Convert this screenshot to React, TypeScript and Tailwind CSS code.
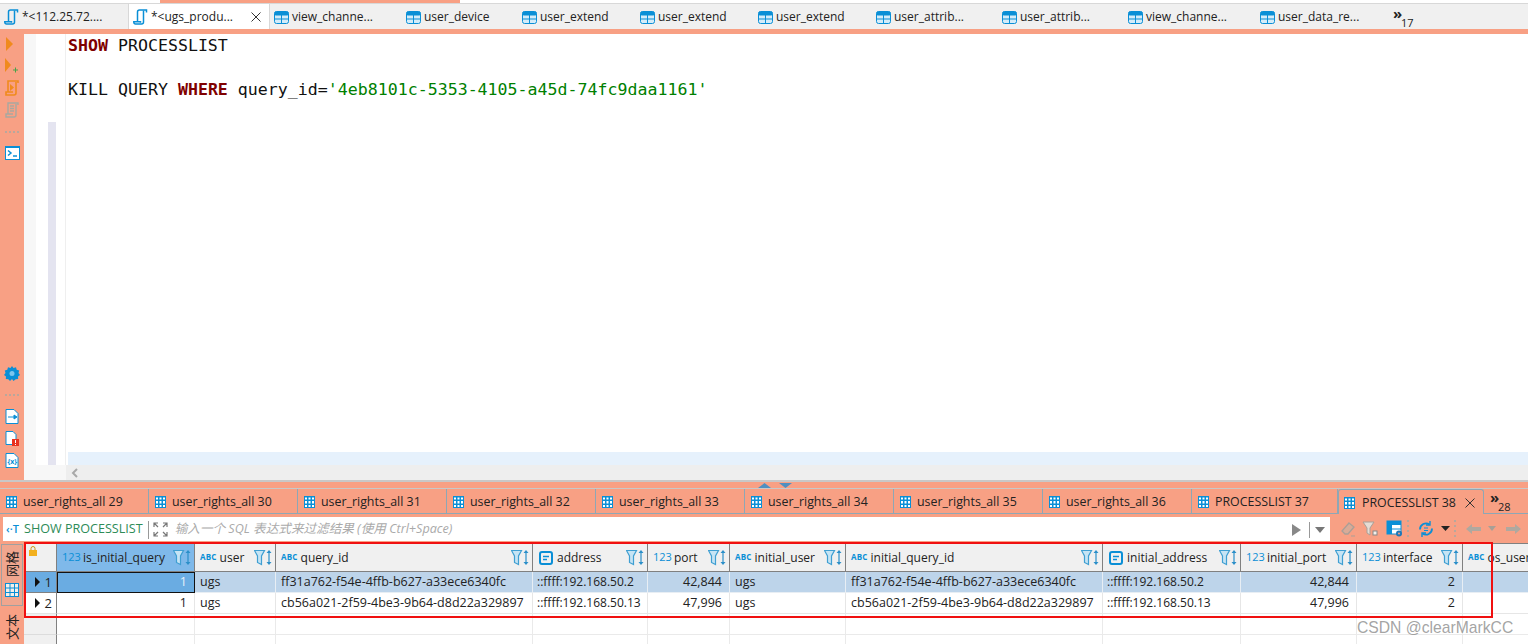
import React from 'react';

const ui = { fontFamily: '"Open Sans", "Noto Sans CJK SC", sans-serif' };

const BLUE = '#0a8fd6';

function ScriptIcon() {
  return (
    <svg width="15" height="16" viewBox="0 0 15 16" fill="none" stroke={BLUE} strokeWidth="1.5" className="shrink-0">
      <path d="M4.500 12V3C4.500 1.800 5.300 1 6.500 1H13.500V3.500" />
      <path d="M10.500 1.500v11.500c0 1.200-.8 2-2 2H2.500c-1 0-1.700-.7-1.700-1.700v-.6H7.500v1" />
    </svg>
  );
}

function TableIcon() {
  return (
    <svg width="15" height="13" viewBox="0 0 15 13" className="shrink-0">
      <rect x="0.500" y="0.500" width="14" height="12" rx="2" fill="#d4ecf9" stroke={BLUE} />
      <rect x="0.500" y="0.500" width="14" height="4" rx="1.500" fill={BLUE} />
      <path d="M7.500 4v8M1 8h13" stroke={BLUE} />
    </svg>
  );
}

function GridIcon({ size = 11 }: { size?: number }) {
  return (
    <svg width={size} height={size + 1} viewBox="0 0 11 12" preserveAspectRatio="none" className="shrink-0">
      <rect x="0" y="0" width="11" height="12" fill={BLUE} />
      <path d="M1 1.500h2v2H1zM4.500 1.500h2v2h-2zM8 1.500h2v2H8zM1 5h2v2.500H1zM4.500 5h2v2.500h-2zM8 5h2v2.500H8zM1 9h2v2H1zM4.500 9h2v2h-2zM8 9h2v2H8z" fill="#fff" />
    </svg>
  );
}

function SideGrid() {
  return (
    <svg width="14" height="14" viewBox="0 0 14 14" className="shrink-0">
      <rect x="0.500" y="0.500" width="13" height="13" fill="#f3efe9" stroke={BLUE} />
      <path d="M5 0v14M9.500 0v14M0 5h14M0 9.500h14" stroke={BLUE} />
    </svg>
  );
}

function FilterSort() {
  return (
    <svg width="18" height="17" viewBox="0 0 18 17" className="shrink-0">
      <path d="M.5 1.500h10L7.500 7v8.500L3.500 13.500V7z" fill="#c6e4f4" stroke="#3f9fd2" strokeWidth="1.200" />
      <path d="M15 1l-2.500 3h5zM15 16l-2.500-3h5z" fill="#2b8fc9" />
      <path d="M15 3v11" stroke="#2b8fc9" strokeWidth="1.200" />
    </svg>
  );
}

function TypeIcon({ kind }: { kind: string }) {
  if (kind === '123') {
    return <span className="text-[11px] leading-none text-[#0a8fd6] mr-[2px] -translate-y-[1px] shrink-0">123</span>;
  }
  if (kind === 'abc') {
    return <span className="text-[8px] font-bold leading-none text-[#0a8fd6] mr-[3px] tracking-[0.2px] -translate-y-[1px] shrink-0">ABC</span>;
  }
  return (
    <svg width="14" height="14" viewBox="0 0 14 14" className="ml-[1px] mr-[4px] shrink-0">
      <rect x="1" y="1" width="12" height="12" rx="2" fill="none" stroke={BLUE} strokeWidth="2" />
      <path d="M4 5.500h6M4 8.500h4" stroke={BLUE} strokeWidth="1.400" />
    </svg>
  );
}

// "more tabs" marker: chevrons with the hidden tab count below them
function MoreTabs({ count }: { count: string }) {
  return (
    <div className="flex flex-col text-[#222]">
      <span className="text-[15px] font-bold leading-[8px] h-[8px]">»</span>
      <span className="text-[11px] leading-[10px] ml-[8px] mt-[1px]">{count}</span>
    </div>
  );
}

const topTabs = [
  { label: '*<112.25.72....', w: 'w-[129px]', script: true },
  { label: '*<ugs_produ...', w: 'w-[141px]', script: true, active: true },
  { label: 'view_channe...', w: 'w-[132px]' },
  { label: 'user_device', w: 'w-[116px]' },
  { label: 'user_extend', w: 'w-[118px]' },
  { label: 'user_extend', w: 'w-[118px]' },
  { label: 'user_extend', w: 'w-[118px]' },
  { label: 'user_attrib...', w: 'w-[126px]' },
  { label: 'user_attrib...', w: 'w-[126px]' },
  { label: 'view_channe...', w: 'w-[132px]' },
  { label: 'user_data_re...', w: 'w-[130px]' },
];

const resultTabs = [
  { label: 'user_rights_all 29', w: 'w-[149px]' },
  { label: 'user_rights_all 30', w: 'w-[149px]' },
  { label: 'user_rights_all 31', w: 'w-[149px]' },
  { label: 'user_rights_all 32', w: 'w-[149px]' },
  { label: 'user_rights_all 33', w: 'w-[149px]' },
  { label: 'user_rights_all 34', w: 'w-[149px]' },
  { label: 'user_rights_all 35', w: 'w-[149px]' },
  { label: 'user_rights_all 36', w: 'w-[149px]' },
  { label: 'PROCESSLIST 37', w: 'w-[146px]' },
];

const gridCols = 'grid grid-cols-[33px_138px_81px_257px_115px_82px_116px_257px_138px_116px_106px_100px]';

const columns = [
  { name: 'is_initial_query', kind: '123', selected: true },
  { name: 'user', kind: 'abc' },
  { name: 'query_id', kind: 'abc' },
  { name: 'address', kind: 'net' },
  { name: 'port', kind: '123' },
  { name: 'initial_user', kind: 'abc' },
  { name: 'initial_query_id', kind: 'abc' },
  { name: 'initial_address', kind: 'net' },
  { name: 'initial_port', kind: '123' },
  { name: 'interface', kind: '123' },
  { name: 'os_user', kind: 'abc' },
];

const rows = [
  ['1', 'ugs', 'ff31a762-f54e-4ffb-b627-a33ece6340fc', '::ffff:192.168.50.2', '42,844', 'ugs', 'ff31a762-f54e-4ffb-b627-a33ece6340fc', '::ffff:192.168.50.2', '42,844', '2', ''],
  ['1', 'ugs', 'cb56a021-2f59-4be3-9b64-d8d22a329897', '::ffff:192.168.50.13', '47,996', 'ugs', 'cb56a021-2f59-4be3-9b64-d8d22a329897', '::ffff:192.168.50.13', '47,996', '2', ''],
];

const numeric = [0, 4, 8, 9];
const addressCols = [3, 7];

function Dots() {
  return (
    <div className="h-[2px] w-[14px] flex justify-between">
      <i className="w-[2px] h-[2px] bg-[#b9a79c]" /><i className="w-[2px] h-[2px] bg-[#b9a79c]" /><i className="w-[2px] h-[2px] bg-[#b9a79c]" /><i className="w-[2px] h-[2px] bg-[#b9a79c]" />
    </div>
  );
}

function VDots() {
  return (
    <div className="w-[2px] h-[17px] flex flex-col justify-between shrink-0">
      <i className="w-[2px] h-[2px] bg-[#b9a79c]" /><i className="w-[2px] h-[2px] bg-[#b9a79c]" /><i className="w-[2px] h-[2px] bg-[#b9a79c]" /><i className="w-[2px] h-[2px] bg-[#b9a79c]" />
    </div>
  );
}

function SideIcons() {
  return (
    <div className="w-[24px] shrink-0 bg-[#f8a084] flex flex-col items-center pt-[2px]">
      <svg width="16" height="16" viewBox="0 0 16 16" className="-ml-[4px]"><path d="M4 1l7 7-7 7z" fill="#f08a1d" /></svg>
      <svg width="16" height="16" viewBox="0 0 16 16" className="mt-[6px]"><path d="M1 0l6 7-6 7z" fill="#f08a1d" /><path d="M9 12h5M11.500 9.500v5" stroke="#4aa34a" /></svg>
      <svg width="16" height="16" viewBox="0 0 16 16" className="mt-[6px]" fill="none" stroke="#f08a1d" strokeWidth="1.600"><path d="M4 12V1h10v2M12 2v11c0 1-1 2-2 2H2v-3h7" /><path d="M6 4l4 3.500-4 3.500z" fill="#f08a1d" stroke="none" /></svg>
      <svg width="16" height="16" viewBox="0 0 16 16" className="mt-[6px]" fill="none" stroke="#a8a8a0" strokeWidth="1.400"><path d="M4 12V1h10v2M12 2v11c0 1-1 2-2 2H2v-3h7M6 4h4M6 6.500h4M6 9h4" /></svg>
      <div className="mt-[13px]"><Dots /></div>
      <svg width="15" height="14" viewBox="0 0 15 14" className="mt-[13px]"><rect x="0.500" y="0.500" width="14" height="13" fill="#fff" stroke={BLUE} /><rect x="0" y="0" width="15" height="2" fill={BLUE} /><path d="M3 4.500l3 2.500-3 2.500" fill="none" stroke={BLUE} strokeWidth="1.500" /><path d="M8 10h4" stroke={BLUE} strokeWidth="1.500" /></svg>

      <svg width="16" height="15" viewBox="0 0 16 15" className="mt-[206px]"><path d="M8 0l1.500 2 2.500-.7.7 2.500 2.500.7-.7 2.500 1.500 2-2 1.500.2 2.500-2.500.2L9.500 15 8 13l-2 2-1.700-1.800-2.500-.2.200-2.500L0 9l1.500-2-.7-2.500 2.500-.7.700-2.500 2.500.7z" fill={BLUE} /><circle cx="8" cy="7.500" r="2.500" fill="#7cc6ee" /></svg>
      <div className="mt-[13px]"><Dots /></div>
      <svg width="14" height="15" viewBox="0 0 14 15" className="mt-[13px]"><path d="M1 .5h8l4 4v10H1z" fill="#fff" stroke={BLUE} /><path d="M3 8h8M9 6l3 2-3 2z" stroke={BLUE} fill={BLUE} /></svg>
      <svg width="14" height="15" viewBox="0 0 14 15" className="mt-[7px]"><path d="M1 .5h7l3 3v10H1z" fill="#fff" stroke={BLUE} /><rect x="7" y="8" width="7" height="7" fill="#e8321e" /><path d="M10.500 9v3M10.500 13v1" stroke="#fff" /></svg>
      <svg width="14" height="15" viewBox="0 0 14 15" className="mt-[7px]"><path d="M1 .5h8l4 4v10H1z" fill="#fff" stroke={BLUE} /><text x="2.500" y="11" fontSize="7" fill={BLUE} fontWeight="bold">{'{x}'}</text></svg>
    </div>
  );
}

function HeaderCell({ name, kind, selected }: { name: string; kind: string; selected?: boolean }) {
  return (
    <div className={`h-[28px] flex items-center pl-[5px] pr-[3px] border-r border-b border-[#808080] text-[12px] text-[#222] overflow-hidden whitespace-nowrap ${selected ? 'bg-[#7fb9ea]' : 'bg-[#f0f0f0]'}`}>
      <TypeIcon kind={kind} />
      <span>{name}</span>
      <span className="ml-auto"><FilterSort /></span>
    </div>
  );
}

export default function App() {
  return (
    <div className="relative w-[1528px] h-[644px] overflow-hidden bg-white flex flex-col" style={ui}>
      {/* top window strip */}
      <div className="h-[3px] bg-white shrink-0"><div className="ml-[160px] w-[300px] h-[3px] bg-[#f8a084]" /></div>
      <div className="h-[26px] bg-[#f0f0f0] border-t border-[#d8d8d8] flex shrink-0 text-[12px] text-[#222] relative">
        {topTabs.map((tab, i) => (
          <div key={i} className={`${tab.w} shrink-0 flex items-center pl-[4px] pt-[1px] gap-[3px] whitespace-nowrap border-r ${tab.active ? 'bg-white border-[#d8d8d8]' : tab.script ? 'border-[#d8d8d8]' : 'border-transparent'}`}>
            {tab.script ? <ScriptIcon /> : <TableIcon />}
            <span>{tab.label}</span>
            {tab.active && (
              <svg width="10" height="10" viewBox="0 0 10 10" className="ml-auto mr-[8px]"><path d="M.5.5l9 9M9.500.5l-9 9" stroke="#333" /></svg>
            )}
          </div>
        ))}
        <div className="ml-[7px] pt-[5px]"><MoreTabs count="17" /></div>
      </div>
      <div className="h-[5px] bg-[#f8a084] shrink-0" />

      {/* editor */}
      <div className="h-[446px] flex shrink-0">
        <SideIcons />
        <div className="flex-1 min-w-0 flex flex-col">
          <div className="flex-1 flex min-h-0">
            <div className="w-[12px] bg-[#f7f7f7]" />
            <div className="w-[12px]" />
            <div className="w-[8px] flex flex-col"><div className="h-[88px]" /><div className="flex-1 bg-[#e4e4f0]" /></div>
            <div className="w-[10px] border-r border-[#efefef]" />
            <div className="flex-1 flex flex-col pl-[2px]">
              <div className="flex-1 pt-[1px] text-[16.6px] leading-[22px] text-[#101010] whitespace-pre" style={{ fontFamily: '"DejaVu Sans Mono", monospace' }}>
                <div><b className="text-[#7f0000]">SHOW</b> PROCESSLIST</div>
                <div>&nbsp;</div>
                <div>KILL QUERY <b className="text-[#7f0000]">WHERE</b> query_id=<span className="text-[#008000]">'4eb8101c-5353-4105-a45d-74fc9daa1161'</span></div>
              </div>
              <div className="h-[13px] bg-[#e6f1fc]" />
            </div>
          </div>
          <div className="h-[15px] flex">
            <div className="w-[42px] bg-[#f7f7f7]" />
            <div className="flex-1 bg-[#eeeeee] flex items-center pl-[5px]">
              <svg width="8" height="10" viewBox="0 0 8 10"><path d="M6 1L2 5l4 4" fill="none" stroke="#a8a8a8" strokeWidth="2" /></svg>
            </div>
          </div>
        </div>
      </div>

      {/* splitter */}
      <div className="h-[9px] shrink-0 bg-[#f8a084] border-t-[2px] border-b border-[#c8c8c8] flex justify-center items-center gap-[8px] pl-[21px]">
        <svg width="13" height="5" viewBox="0 0 13 5"><path d="M6.500 0L13 5H0z" fill="#4f8fc0" /></svg>
        <svg width="13" height="5" viewBox="0 0 13 5"><path d="M0 0h13L6.500 5z" fill="#4f8fc0" /></svg>
      </div>

      {/* result tabs */}
      <div className="h-[25px] shrink-0 bg-[#f8a084] border-b border-[#8ea7b5] flex text-[12.4px] text-[#222]">
        {resultTabs.map((t, i) => (
          <div key={i} className={`${t.w} shrink-0 flex items-center pl-[6px] pt-[2px] gap-[6px] whitespace-nowrap border-r border-[#8ea7b5]`}>
            <GridIcon />
            <span>{t.label}</span>
          </div>
        ))}
        <div className="w-[146px] shrink-0 h-[25px] flex items-center pl-[5px] pt-[2px] gap-[7px] whitespace-nowrap border border-b-0 border-[#8ea7b5] rounded-t-[3px] bg-[#f8a084]">
          <GridIcon />
          <span>PROCESSLIST 38</span>
          <svg width="10" height="10" viewBox="0 0 10 10" className="ml-auto mr-[8px]"><path d="M.5.5l9 9M9.500.5l-9 9" stroke="#333" /></svg>
        </div>
        <div className="ml-[6px] pt-[4px]"><MoreTabs count="28" /></div>
      </div>

      {/* filter bar */}
      <div className="h-[29px] shrink-0 bg-[#f8a084] flex items-center pl-[3px]">
        <div className="w-[1327px] h-[24px] bg-white flex items-center pl-[3px] pt-[2px] text-[12.6px]">
          <span className="text-[#0a8fd6] text-[11px] font-semibold w-[18px] shrink-0 whitespace-nowrap">‹·T</span>
          <span className="text-[#2e8b57] whitespace-nowrap">SHOW PROCESSLIST</span>
          <span className="w-px h-[18px] bg-[#999] ml-[5px] shrink-0" />
          <svg width="15" height="15" viewBox="0 0 15 15" className="ml-[4px] shrink-0" fill="none" stroke="#777" strokeWidth="1.200"><path d="M1 5V1h4M10 1h4v4M1 10v4h4M14 10v4h-4M1 1l4 4M14 1l-4 4M1 14l4-4M14 14l-4-4" /></svg>
          <span className="ml-[7px] italic text-[#aaaaaa] whitespace-nowrap">输入一个 SQL 表达式来过滤结果 (使用 Ctrl+Space)</span>
          <svg width="9" height="12" viewBox="0 0 9 12" className="ml-auto shrink-0"><path d="M0 0l9 6-9 6z" fill="#888" /></svg>
          <span className="w-px h-[16px] bg-[#999] ml-[8px] shrink-0" />
          <svg width="10" height="6" viewBox="0 0 10 6" className="ml-[5px] mr-[5px] shrink-0"><path d="M0 0h10L5 6z" fill="#777" /></svg>
        </div>
        <div className="flex items-center">
          <svg width="16" height="16" viewBox="0 0 16 16" className="ml-[10px]"><path d="M9 2l5 4-6 7H5L2 10z" fill="#d9ab97" stroke="#ab9f97" strokeWidth="1.300" /><path d="M11 15h4" stroke="#ab9f97" /></svg>
          <svg width="16" height="15" viewBox="0 0 16 15" className="ml-[6px]"><path d="M1 1h11L8 7v7L5 12V7z" fill="#e6dcd4" stroke="#a8a098" /><rect x="11" y="10" width="4" height="4" fill="#f5f0ea" stroke="#888" /></svg>
          <svg width="17" height="17" viewBox="0 0 17 17" className="ml-[8px]"><rect x="1" y="1" width="14" height="13" fill="#fff" stroke={BLUE} /><rect x="1" y="1" width="14" height="4" fill={BLUE} /><rect x="1" y="5" width="5" height="9" fill={BLUE} /><path d="M1 9h14" stroke={BLUE} /><circle cx="13" cy="13.500" r="3" fill="#1f78b8" /><circle cx="13" cy="13.500" r="1" fill="#f8a084" /></svg>
          <div className="ml-[4px]"><VDots /></div>
          <svg width="16" height="18" viewBox="0 0 16 18" className="ml-[9px]" fill="none" stroke={BLUE} strokeWidth="1.800"><path d="M2 9.500a6 6 0 0 1 9.500-5M14 8.500a6 6 0 0 1-9.500 5" /><path d="M12 1v4H8M4 17v-4h4" strokeWidth="1.400" /><path d="M6 8h4M6 10.500h4" strokeWidth="1" /></svg>
          <svg width="9" height="5" viewBox="0 0 9 5" className="ml-[7px]"><path d="M0 0h9L4.500 5z" fill="#222" /></svg>
          <div className="ml-[4px]"><VDots /></div>
          <svg width="15" height="12" viewBox="0 0 15 12" className="ml-[10px]"><path d="M0 6l6-5v3h9v4H6v3z" fill="#b0a89f" /></svg>
          <svg width="8" height="5" viewBox="0 0 8 5" className="ml-[7px]"><path d="M0 0h8L4 5z" fill="#a89f96" /></svg>
          <svg width="15" height="12" viewBox="0 0 15 12" className="ml-[10px]"><path d="M15 6L9 1v3H0v4h9v3z" fill="#b0a89f" /></svg>
        </div>
      </div>

      {/* results */}
      <div className="flex-1 flex min-h-0">
        <div className="w-[24px] shrink-0 bg-[#f8a084] text-[13px] text-[#222] flex flex-col items-center">
          <div className="mt-[1px] w-[22px] h-[62px] border border-[#a0a0a0] bg-[#f0a68e] flex flex-col items-center justify-between pb-[8px] pt-[6px]">
            <span className="[writing-mode:vertical-rl] [text-orientation:sideways] rotate-180 leading-none">网格</span>
            <SideGrid />
          </div>
          <span className="mt-[8px] [writing-mode:vertical-rl] [text-orientation:sideways] rotate-180 leading-none">文本</span>
        </div>
        <div className="flex-1 min-w-0 overflow-hidden">
          <div className={`${gridCols} border-t border-[#808080]`}>
            <div className="h-[28px] bg-[#f0f0f0] border-r border-b border-[#808080] pl-[5px] pt-[2px]">
              <svg width="8" height="10" viewBox="0 0 8 10"><rect x="0" y="4" width="8" height="6" fill="#f2b01e" /><path d="M2 4V2.500a2 2 0 0 1 4 0V4" fill="none" stroke="#c9961a" /></svg>
            </div>
            {columns.map((c) => <HeaderCell key={c.name} {...c} />)}
          </div>
          {rows.map((row, r) => (
            <div key={r} className={`${gridCols} h-[21px] text-[12.5px] leading-[20px] text-[#222]`}>
              <div className={`border-r border-b flex items-center justify-between pl-[11px] pr-[4px] text-[13px] border-[#808080] ${r === 0 ? 'bg-[#6aace2]' : 'bg-white border-b-[#e4e4e4]'}`}>
                <svg width="5" height="10" viewBox="0 0 5 10"><path d="M0 0l5 5-5 5z" fill="#111" /></svg>
                <span>{r + 1}</span>
              </div>
              {row.map((cell, c) => (
                <div
                  key={c}
                  className={`px-[5px] whitespace-nowrap overflow-hidden border-r border-b ${addressCols.includes(c) ? 'text-[12px] pl-[4px]' : ''} ${numeric.includes(c) ? 'text-right pr-[7px]' : ''} ${r === 0 && c === 0 ? 'bg-[#6aace2] text-[#e8f2fa] outline outline-1 -outline-offset-1 outline-[#111]' : r === 0 ? 'bg-[#bdd4ea] border-[#e8eef4]' : 'bg-white border-[#e6e6e6]'}`}
                >
                  {cell}
                </div>
              ))}
            </div>
          ))}
          {[0, 1].map((r) => (
            <div key={r} className={`${gridCols} h-[21px]`}>
              <div className="bg-[#f0f0f0] border-r border-b border-r-[#808080] border-b-[#dcdcdc]" />
              {columns.map((c) => <div key={c.name} className="border-r border-b border-[#eaeaea]" />)}
            </div>
          ))}
        </div>
      </div>

      {/* annotation + watermark */}
      <div className="absolute left-[24px] top-[542px] w-[1469px] h-[76px] border-2 border-[#f01010] pointer-events-none" />
      <div className="absolute left-[1357px] top-[618px] text-[15.7px] leading-[20px] text-[#8c8c8c]/80 whitespace-nowrap" style={{ fontFamily: '"Liberation Sans", sans-serif' }}>CSDN @clearMarkCC</div>
    </div>
  );
}
